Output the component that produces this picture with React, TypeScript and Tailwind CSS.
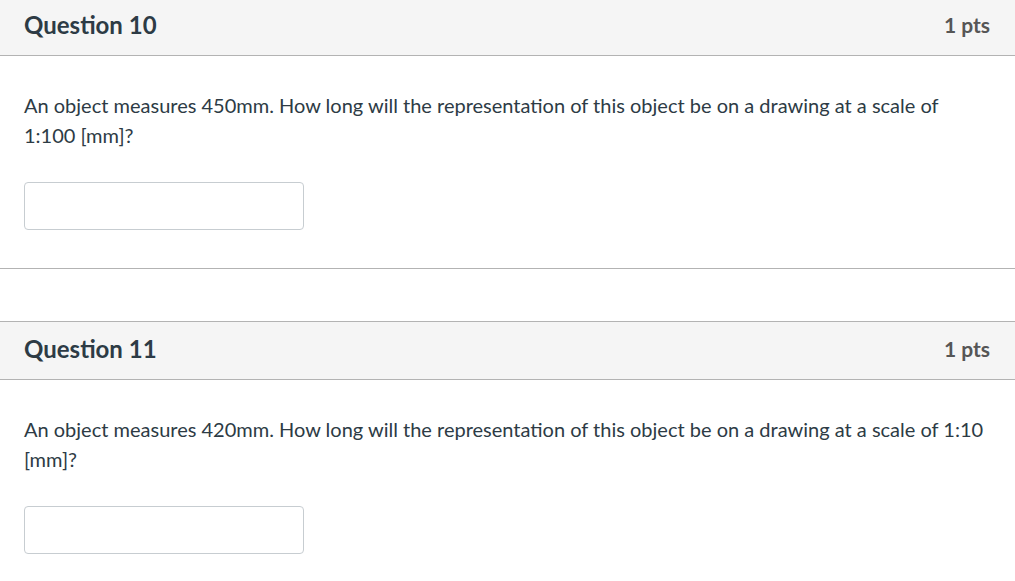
import React from 'react';

const questions = [
  {
    num: 10,
    text: 'An object measures 450mm. How long will the representation of this object be on a drawing at a scale of 1:100 [mm]?',
  },
  {
    num: 11,
    text: 'An object measures 420mm. How long will the representation of this object be on a drawing at a scale of 1:10 [mm]?',
  },
];

const QuestionCard: React.FC<{ num: number; text: string }> = ({ num, text }) => (
  <div className="border-y border-[#b3b3b3] bg-white">
    <div className="flex h-[58px] items-center justify-between border-b border-[#b3b3b3] bg-[#f5f5f5] pb-[4px] pl-6 pr-[25px]">
      <h2 className="text-[24px] font-bold text-[#2d3b45]">Question {num}</h2>
      <span className="text-[21px] font-bold text-[#565656]">1 pts</span>
    </div>
    <div className="px-6 pt-[34px] pb-[38px]">
      <p className="text-[20px] leading-[30px] text-[#2d3b45]">{text}</p>
      <input
        type="text"
        className="mt-[32px] block h-[48px] w-[280px] rounded-[4px] border border-[#c7cdd1] bg-white px-3 outline-none"
      />
    </div>
  </div>
);

export default function App() {
  return (
    <div className="-mt-[3px] min-h-screen bg-white font-['Lato',sans-serif]">
      <div className="flex flex-col gap-[52px]">
        {questions.map((q) => (
          <QuestionCard key={q.num} num={q.num} text={q.text} />
        ))}
      </div>
    </div>
  );
}
